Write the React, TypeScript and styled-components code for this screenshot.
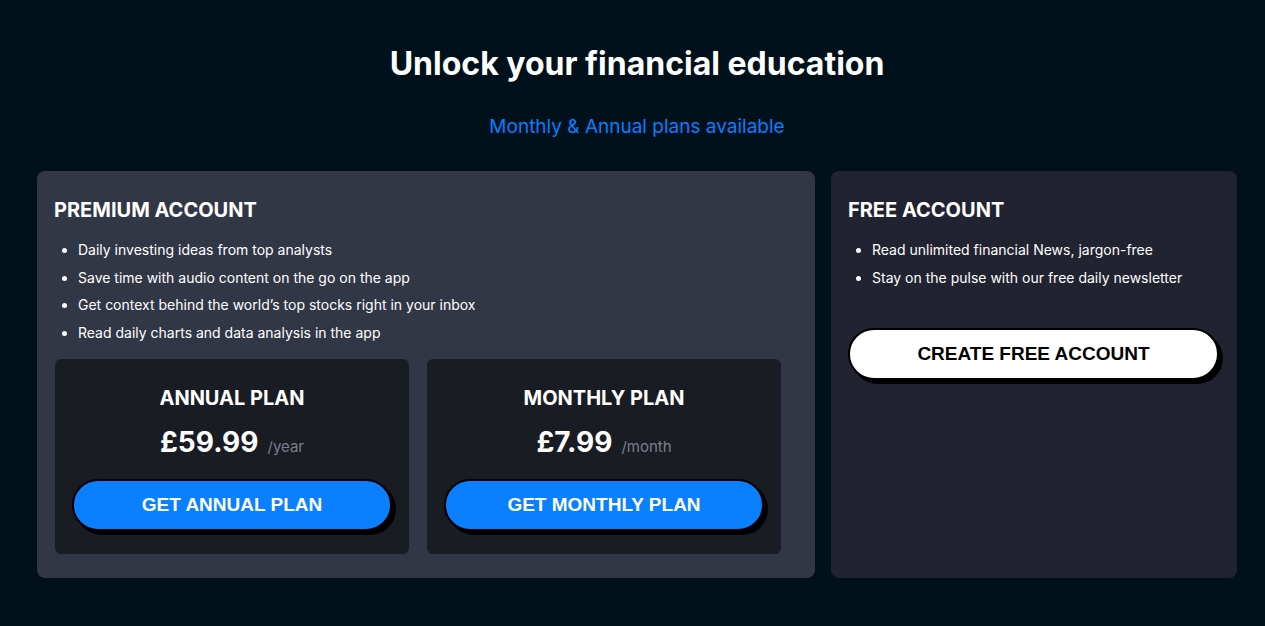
import styled, { createGlobalStyle } from "styled-components";

const GlobalStyle = createGlobalStyle`
  html, body {
    margin: 0;
    padding: 0;
    background: #00111b;
  }
  body {
    font-family: Inter, "Noto Sans", sans-serif;
    color: #ffffff;
  }
`;

interface Plan {
  name: string;
  price: string;
  period: string;
  cta: string;
}

const premiumFeatures = [
  "Daily investing ideas from top analysts",
  "Save time with audio content on the go on the app",
  "Get context behind the world\u2019s top stocks right in your inbox",
  "Read daily charts and data analysis in the app",
];

const freeFeatures = [
  "Read unlimited financial News, jargon-free",
  "Stay on the pulse with our free daily newsletter",
];

const plans: Plan[] = [
  { name: "ANNUAL PLAN", price: "£59.99", period: "/year", cta: "GET ANNUAL PLAN" },
  { name: "MONTHLY PLAN", price: "£7.99", period: "/month", cta: "GET MONTHLY PLAN" },
];

const App = () => {
  return (
    <Page>
      <GlobalStyle />
      <Title>Unlock your financial education</Title>
      <Subtitle>Monthly &amp; Annual plans available</Subtitle>
      <Cards>
        <AccountCard $variant="premium">
          <CardHeading>PREMIUM ACCOUNT</CardHeading>
          <FeatureList>
            {premiumFeatures.map((f) => (
              <li key={f}>{f}</li>
            ))}
          </FeatureList>
          <PlanRow>
            {plans.map((plan) => (
              <PlanCard key={plan.name}>
                <PlanName>{plan.name}</PlanName>
                <PriceLine>
                  <Price>{plan.price}</Price>
                  <Period>{plan.period}</Period>
                </PriceLine>
                <PillButton $light={false}>{plan.cta}</PillButton>
              </PlanCard>
            ))}
          </PlanRow>
        </AccountCard>
        <AccountCard $variant="free">
          <CardHeading>FREE ACCOUNT</CardHeading>
          <FeatureList>
            {freeFeatures.map((f) => (
              <li key={f}>{f}</li>
            ))}
          </FeatureList>
          <FreeAction>
            <PillButton $light>CREATE FREE ACCOUNT</PillButton>
          </FreeAction>
        </AccountCard>
      </Cards>
    </Page>
  );
};

export default App;

const Page = styled.div`
  min-height: 626px;
  box-sizing: border-box;
  padding: 44px 28px 0 37px;
  display: flex;
  flex-direction: column;
  align-items: center;
`;

const Title = styled.h1`
  margin: 0;
  font-size: 32px;
  font-weight: 700;
  line-height: 40px;
  color: #ffffff;
`;

const Subtitle = styled.p`
  margin: 31px 0 0;
  font-size: 19px;
  line-height: 23px;
  color: #0a7dff;
`;

const Cards = styled.div`
  margin-top: 33px;
  display: grid;
  grid-template-columns: 778px 406px;
  gap: 16px;
  width: 1200px;
`;

const AccountCard = styled.section<{ $variant: "premium" | "free" }>`
  background: ${(p) => (p.$variant === "premium" ? "#323746" : "#222330")};
  border-radius: 8px;
  padding: 27px 17px 25px 17px;
  height: 407px;
  box-sizing: border-box;
  display: flex;
  flex-direction: column;
`;

const CardHeading = styled.h2`
  margin: 0;
  font-size: 20px;
  font-weight: 700;
  line-height: 24px;
`;

const FeatureList = styled.ul`
  margin: 19px 0 0;
  padding-left: 24px;
  font-size: 14px;
  line-height: 17px;
  color: #ffffff;

  li {
    margin-bottom: 10.7px;
  }
  li:last-child {
    margin-bottom: 0;
  }
`;

const PlanRow = styled.div`
  margin-top: 18px;
  margin-left: 1px;
  display: grid;
  grid-template-columns: 354px 354px;
  gap: 18px;
`;

const PlanCard = styled.div`
  background: #1a1c23;
  border-radius: 6px;
  height: 195px;
  box-sizing: border-box;
  padding: 27px 17px 0;
  display: flex;
  flex-direction: column;
  align-items: center;
`;

const PlanName = styled.h3`
  margin: 0;
  font-size: 20px;
  font-weight: 700;
  line-height: 24px;
`;

const PriceLine = styled.div`
  margin-top: 15px;
  display: flex;
  align-items: baseline;
  gap: 9px;
`;

const Price = styled.span`
  font-size: 28px;
  font-weight: 700;
  line-height: 34px;
`;

const Period = styled.span`
  font-size: 15px;
  color: #7b7f8c;
`;

const PillButton = styled.button<{ $light: boolean }>`
  margin-top: 20px;
  width: 100%;
  height: 52px;
  border-radius: 26px;
  border: 2px solid #000000;
  box-shadow: 4px 4px 0 #000000;
  background: ${(p) => (p.$light ? "#ffffff" : "#0a80ff")};
  color: ${(p) => (p.$light ? "#000000" : "#ffffff")};
  font-family: "Liberation Sans", Arial, sans-serif;
  font-size: 19px;
  font-weight: 700;
  cursor: pointer;
`;

const FreeAction = styled.div`
  margin-top: 42px;
  padding-right: 1px;

  button {
    margin-top: 0;
  }
`;
